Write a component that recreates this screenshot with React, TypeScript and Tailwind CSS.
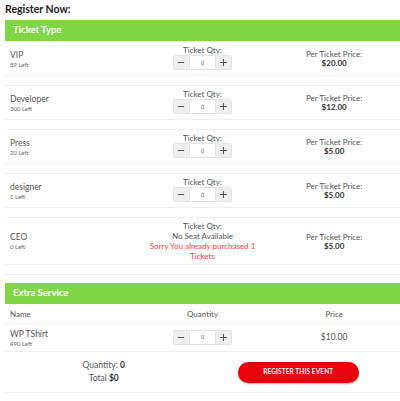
import React from 'react';

const TICKETS = [
  { name: 'VIP', left: 89, price: '$20.00' },
  { name: 'Developer', left: 300, price: '$12.00' },
  { name: 'Press', left: 20, price: '$5.00' },
  { name: 'designer', left: 1, price: '$5.00' },
];

function Stepper() {
  return (
    <div className="flex h-[15px] w-[59px] overflow-hidden rounded-[2px] border border-[#e3e3e3] bg-white">
      <button className="flex w-[15px] items-center justify-center bg-[#efefef]">
        <span className="block h-[1.5px] w-[6px] bg-[#555]" />
      </button>
      <div className="flex flex-1 items-center justify-center border-x border-[#e3e3e3] text-[5.5px] text-[#555]">
        0
      </div>
      <button className="relative flex w-[15px] items-center justify-center bg-[#efefef]">
        <span className="block h-[1.5px] w-[7px] bg-[#555]" />
        <span className="absolute block h-[7px] w-[1.5px] bg-[#555]" />
      </button>
    </div>
  );
}

function SectionBar({ title }: { title: string }) {
  return (
    <div className="flex h-[21px] items-center bg-[#80d644] pl-[8px] text-[9.5px] font-bold text-white">
      {title}
    </div>
  );
}

function TicketRow({ name, left, price, soldOut }: { name: string; left: number; price: string; soldOut?: boolean }) {
  return (
    <div className="grid grid-cols-3 border-y border-[#eeeeee]">
      <div className="flex flex-col justify-center pl-[5px]">
        <div className="text-[8.5px] leading-[10px] text-[#555]">{name}</div>
        <div className="mt-[1px] text-[6px] leading-[7px] text-[#666]">{left} Left</div>
      </div>
      <div
        className={`flex flex-col items-center px-[8px] pt-[3px] text-center text-[8px] leading-[10px] text-[#555] ${
          soldOut ? 'pb-[3px]' : 'pb-[5px]'
        }`}
      >
        <div>Ticket Qty:</div>
        {soldOut ? (
          <>
            <div className="text-[#555]">No Seat Available</div>
            <div className="px-[4px] text-[#ff3b3b]">Sorry You already purchased 1 Tickets</div>
          </>
        ) : (
          <Stepper />
        )}
      </div>
      <div className="flex flex-col items-center justify-center text-center">
        <div className="text-[8px] leading-[10px] text-[#555]">Per Ticket Price:</div>
        <div className="text-[8px] font-bold leading-[9px] text-[#333]">{price}</div>
      </div>
    </div>
  );
}

export default function App() {
  return (
    <div className="h-[401px] w-[400px] overflow-hidden bg-white font-['Lato',sans-serif]">
      <div className="ml-[5px] w-[395px]">
        <h2 className="flex h-[20px] items-center text-[10.5px] font-bold text-[#222]">Register Now:</h2>
        <SectionBar title="Ticket Type" />
        <div className="flex flex-col gap-[9px]">
          {TICKETS.map((t) => (
            <TicketRow key={t.name} name={t.name} left={t.left} price={t.price} />
          ))}
          <TicketRow name="CEO" left={0} price="$5.00" soldOut />
          <div className="border-t border-[#eeeeee]" />
        </div>
        <div className="mt-[8px]">
          <SectionBar title="Extra Service" />
        </div>
        <div className="grid h-[20px] grid-cols-3 items-center border-b border-[#eeeeee] text-[8px] text-[#555]">
          <div className="pl-[5px]">Name</div>
          <div className="text-center">Quantity</div>
          <div className="text-center">Price</div>
        </div>
        <div className="grid h-[28px] grid-cols-3 items-center border-b border-[#eeeeee]">
          <div className="flex flex-col justify-center pl-[5px]">
            <div className="text-[8.5px] leading-[10px] text-[#555]">WP TShirt</div>
            <div className="mt-[1px] text-[6px] leading-[7px] text-[#666]">490 Left</div>
          </div>
          <div className="flex justify-center">
            <Stepper />
          </div>
          <div className="text-center text-[8.5px] text-[#555]">$10.00</div>
        </div>
        <div className="grid h-[41px] grid-cols-2 items-center border-b border-[#eeeeee]">
          <div className="flex flex-col items-center text-[8.5px] leading-[13px] text-[#555]">
            <div>
              Quantity: <span className="font-bold text-[#333]">0</span>
            </div>
            <div>
              Total <span className="font-bold text-[#333]">$0</span>
            </div>
          </div>
          <div className="flex justify-center pr-[6px]">
            <button className="h-[21px] w-[121px] rounded-full bg-[#e8000b] text-[6.5px] font-bold tracking-[0.1px] text-white shadow-[0_1px_2px_rgba(0,0,0,0.3)]">
              REGISTER THIS EVENT
            </button>
          </div>
        </div>
      </div>
    </div>
  );
}
